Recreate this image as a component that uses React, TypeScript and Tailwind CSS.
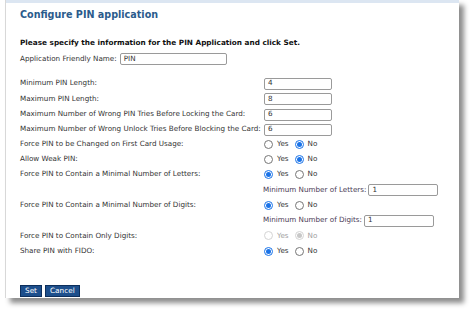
import React from 'react'

const font = { fontFamily: '"DejaVu Sans", Verdana, sans-serif' }

function Radio({ checked, disabled }: { checked?: boolean; disabled?: boolean }) {
  if (disabled) {
    return (
      <span className="inline-flex h-[9px] w-[9px] items-center justify-center rounded-full border border-[#d4d4d4] bg-white">
        {checked && <span className="h-[5px] w-[5px] rounded-full bg-[#c8c8c8]" />}
      </span>
    )
  }
  return checked ? (
    <span className="inline-flex h-[9px] w-[9px] items-center justify-center rounded-full border border-[#1a73e8] bg-white">
      <span className="h-[5px] w-[5px] rounded-full bg-[#1a73e8]" />
    </span>
  ) : (
    <span className="inline-block h-[9px] w-[9px] rounded-full border border-[#767676] bg-white" />
  )
}

function YesNo({ yes, disabled }: { yes: boolean; disabled?: boolean }) {
  const txt = disabled ? 'text-[#a0a0a0]' : 'text-[#333]'
  return (
    <div className={`flex items-center ${txt}`}>
      <Radio checked={yes} disabled={disabled} />
      <span className="ml-[4px]">Yes</span>
      <span className="ml-[6px]" />
      <Radio checked={!yes} disabled={disabled} />
      <span className="ml-[4px]">No</span>
    </div>
  )
}

function Field({ value, w = 'w-[68px]' }: { value: string; w?: string }) {
  return (
    <div className={`flex h-[12px] ${w} items-center rounded-[2px] border border-[#9a9a9a] bg-white px-[3px] text-[#333]`}>
      {value}
    </div>
  )
}

function Row({ label, children, h = 'h-[15px]' }: { label?: string; children: React.ReactNode; h?: string }) {
  return (
    <div className={`flex ${h} items-center`}>
      <div className="w-[244px] shrink-0 whitespace-nowrap">{label}</div>
      <div className="flex items-center">{children}</div>
    </div>
  )
}

export default function App() {
  return (
    <div className="h-[313px] w-[474px] bg-white" style={font}>
      <div className="ml-[5px] h-[298px] w-[454px] border-l border-[#d8d8d8] bg-white shadow-[5px_5px_5px_rgba(0,0,0,0.45)]">
        <div className="h-[3px] bg-[#dce6f2]" />
        <div className="pl-[14px] text-[7.2px] text-[#333]">
          <h1 className="pt-[4px] text-[9.6px] font-bold leading-[15px] text-[#2b5b8c]">Configure PIN application</h1>

          <p className="mt-[16px] text-[7.3px] font-bold leading-[10px] text-[#111]">
            Please specify the information for the PIN Application and click Set.
          </p>

          <div className="mt-[4px] flex h-[14px] items-center">
            <span className="whitespace-nowrap">Application Friendly Name:</span>
            <div className="ml-[3px]">
              <Field value="PIN" w="w-[107px]" />
            </div>
          </div>

          <div className="mt-[10px]">
            <Row label="Minimum PIN Length:">
              <Field value="4" />
            </Row>
            <Row label="Maximum PIN Length:" h="h-[16px]">
              <Field value="8" />
            </Row>
            <Row label="Maximum Number of Wrong PIN Tries Before Locking the Card:">
              <Field value="6" />
            </Row>
            <Row label="Maximum Number of Wrong Unlock Tries Before Blocking the Card:">
              <Field value="6" />
            </Row>
            <Row label="Force PIN to be Changed on First Card Usage:">
              <YesNo yes={false} />
            </Row>
            <Row label="Allow Weak PIN:">
              <YesNo yes={false} />
            </Row>
            <Row label="Force PIN to Contain a Minimal Number of Letters:">
              <YesNo yes={true} />
            </Row>
            <Row h="h-[16px]">
              <div className="-ml-[1px] flex items-center text-[#4a3a55]">
                <span className="whitespace-nowrap">Minimum Number of Letters:</span>
                <div className="ml-[2px]">
                  <Field value="1" w="w-[70px]" />
                </div>
              </div>
            </Row>
            <Row label="Force PIN to Contain a Minimal Number of Digits:">
              <YesNo yes={true} />
            </Row>
            <Row>
              <div className="-ml-[1px] flex items-center text-[#4a3a55]">
                <span className="whitespace-nowrap">Minimum Number of Digits:</span>
                <div className="ml-[2px]">
                  <Field value="1" w="w-[70px]" />
                </div>
              </div>
            </Row>
            <Row label="Force PIN to Contain Only Digits:" h="h-[16px]">
              <YesNo yes={false} disabled />
            </Row>
            <Row label="Share PIN with FIDO:">
              <YesNo yes={true} />
            </Row>
          </div>

          <div className="mt-[26px] flex gap-[3px]">
            <button className="h-[12px] border border-[#0d2f5c] bg-[#1d4f8c] px-[4px] text-[7.3px] leading-[10px] text-white">
              Set
            </button>
            <button className="h-[12px] border border-[#0d2f5c] bg-[#1d4f8c] px-[4px] text-[7.3px] leading-[10px] text-white">
              Cancel
            </button>
          </div>
        </div>
      </div>
    </div>
  )
}
